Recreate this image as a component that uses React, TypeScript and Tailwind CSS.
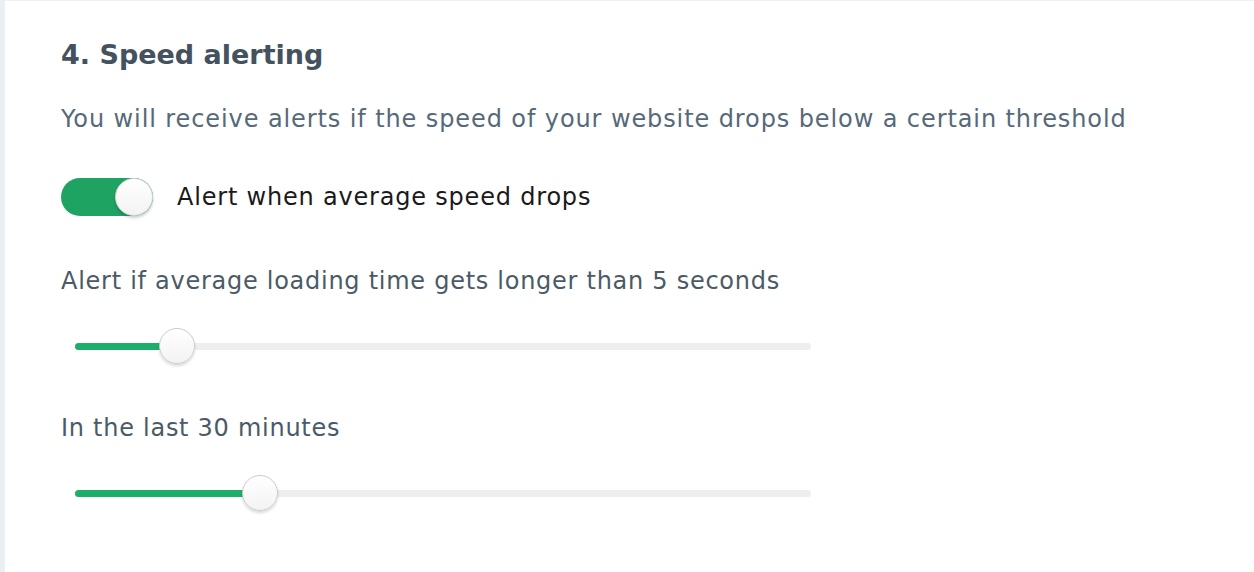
import React from 'react'

const font = {fontFamily: '"DejaVu Sans", "Open Sans", sans-serif'}

function Slider({percent}: {percent: number}) {
  return (
    <div className="relative ml-[14px] h-[36px] w-[736px]">
      <div className="absolute top-[15px] h-[7px] w-full rounded-full bg-[#eeeeee]" />
      <div
        className="absolute top-[15px] h-[7px] rounded-full bg-[#1fae69]"
        style={{width: `${percent}%`}}
      />
      <div
        className="absolute top-0 h-[36px] w-[36px] -translate-x-1/2 rounded-full border border-[#cccccc] bg-gradient-to-b from-white to-[#f3f3f3] shadow-[0_2px_3px_rgba(0,0,0,0.15)]"
        style={{left: `${percent}%`}}
      />
    </div>
  )
}

export default function App() {
  return (
    <div className="flex h-[572px] w-[1254px] bg-white" style={font}>
      <div className="w-[5px] bg-[#e9eff3]" />
      <div className="flex flex-1 flex-col border-t border-[#f0f0f0] pl-[56px]">
        <h2 className="mt-[36px] text-[27px] font-bold leading-[36px] text-[#44525f]">
          4. Speed alerting
        </h2>
        <p className="mt-[31px] text-[24px] leading-[30px] tracking-[0.9px] text-[#56697a]">
          You will receive alerts if the speed of your website drops below a certain threshold
        </p>
        <div className="mt-[44px] flex items-center">
          <div className="relative h-[38px] w-[92px] rounded-full bg-[#1fa363]">
            <div className="absolute right-0 top-0 h-[38px] w-[38px] rounded-full border border-[#d6d6d6] bg-gradient-to-b from-white to-[#f3f3f3] shadow-[0_2px_3px_rgba(0,0,0,0.2)]" />
          </div>
          <span className="ml-[24px] text-[24px] leading-[30px] tracking-[0.8px] text-[#1a1a1a]">
            Alert when average speed drops
          </span>
        </div>
        <p className="mt-[50px] text-[24px] leading-[30px] tracking-[0.73px] text-[#4b5a67]">
          Alert if average loading time gets longer than 5 seconds
        </p>
        <div className="mt-[32px]">
          <Slider percent={13.9} />
        </div>
        <p className="mt-[49px] text-[24px] leading-[30px] tracking-[0.73px] text-[#4b5a67]">
          In the last 30 minutes
        </p>
        <div className="mt-[32px]">
          <Slider percent={25.1} />
        </div>
      </div>
    </div>
  )
}
